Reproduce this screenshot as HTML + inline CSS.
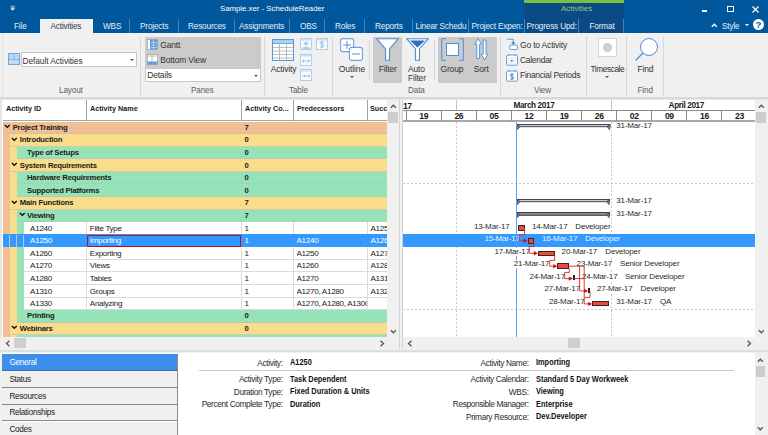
<!DOCTYPE html>
<html><head><meta charset="utf-8">
<style>
*{box-sizing:border-box;margin:0;padding:0}
html,body{width:768px;height:435px;overflow:hidden;background:#f0f0f0;font-family:"Liberation Sans",sans-serif;color:#222}
.a{position:absolute}
.t{position:absolute;white-space:nowrap;line-height:1}
#title{left:0;top:0;width:768px;height:33px;background:#01579b}
.tab{position:absolute;top:19.5px;height:14px;color:#e8eef6;font-size:8.2px;letter-spacing:-0.15px;line-height:14px;white-space:nowrap}
.sep{position:absolute;top:19px;width:1px;height:14px;background:#4a80b8}
.rb{position:absolute;font-size:8.5px;letter-spacing:-0.18px;color:#333;white-space:nowrap;line-height:1;margin-top:0.3px}
.glab{position:absolute;top:86.8px;font-size:8.2px;letter-spacing:-0.15px;color:#5e5e5e;white-space:nowrap;line-height:1}
.gsep{position:absolute;width:1px;background:#d8d8d8}
</style></head><body>
<!-- title + tabs -->
<div id="title" class="a"></div>
<div class="a" style="left:524px;top:0;width:100px;height:3px;background:#7ac143"></div>
<div class="a" style="left:524px;top:3px;width:100px;height:30px;background:#0b4a85"></div>
<div class="t" style="left:561px;top:4.8px;font-size:7.9px;color:#8fcf6a">Activities</div>
<div class="t" style="left:220px;top:4.5px;font-size:7.8px;color:#fff">Sample.xer - ScheduleReader</div>
<!-- quick access -->
<svg class="a" style="left:9.5px;top:4.5px" width="6" height="6"><rect x="0.6" y="0.6" width="4.2" height="3.2" fill="#6f9fd0"/><path d="M0.4 3.6H5L2.7 5.6Z" fill="#fff"/></svg>
<!-- window controls -->
<div class="a" style="left:702px;top:10px;width:5px;height:1.5px;background:#fff"></div>
<div class="a" style="left:727px;top:6px;width:7px;height:6px;border:1px solid #fff;border-top-width:1.5px"></div>
<svg class="a" style="left:752px;top:6px" width="7" height="7"><path d="M0.5 0.5L6.5 6.5M6.5 0.5L0.5 6.5" stroke="#fff" stroke-width="1.2"/></svg>
<!-- tab row -->
<div class="a" style="left:40px;top:19px;width:53px;height:14px;background:#f0f0f0"></div>
<div class="tab" style="left:14px">File</div>
<div class="tab" style="left:50.5px;color:#303848">Activities</div>
<div class="tab" style="left:103px">WBS</div>
<div class="sep" style="left:129px"></div>
<div class="tab" style="left:140px">Projects</div>
<div class="sep" style="left:178px"></div>
<div class="tab" style="left:188px">Resources</div>
<div class="sep" style="left:234px"></div>
<div class="tab" style="left:239px">Assignments</div>
<div class="sep" style="left:289px"></div>
<div class="tab" style="left:300px">OBS</div>
<div class="sep" style="left:324px"></div>
<div class="tab" style="left:335px">Roles</div>
<div class="sep" style="left:364px"></div>
<div class="tab" style="left:375px">Reports</div>
<div class="sep" style="left:412px"></div>
<div class="tab" style="left:415.5px">Linear Schedu</div>
<div class="sep" style="left:468px"></div>
<div class="tab" style="left:471.5px">Project Expen:</div>
<div class="sep" style="left:524px"></div>
<div class="tab" style="left:526.5px">Progress Upd:</div>
<div class="sep" style="left:578px"></div>
<div class="tab" style="left:589.5px">Format</div>
<div class="sep" style="left:623px"></div>
<svg class="a" style="left:711px;top:23px" width="7" height="5"><path d="M0.8 3.8L3.3 1.2L5.8 3.8" stroke="#fff" stroke-width="1.3" fill="none"/></svg>
<div class="tab" style="left:722px">Style</div>
<div class="a" style="left:745px;top:24px;width:0;height:0;border-left:2px solid transparent;border-right:2px solid transparent;border-top:2.5px solid #fff"></div>
<div class="a" style="left:752.9px;top:18.9px;width:11.6px;height:11.4px;border-radius:50%;background:#fff"></div>
<div class="t" style="left:755.6px;top:20.3px;font-size:9.5px;font-weight:700;color:#01579b">?</div>

<!-- RIBBON -->
<div class="a" style="left:0;top:33px;width:768px;height:67px;background:linear-gradient(to bottom,#f0f0f0 0,#f0f0f0 63.5px,#d6d6d6 64.5px,#dedede 66px,#ececec 67px)"></div>
<div class="a" style="left:2px;top:33px;width:1px;height:64px;background:#e2e2e2"></div>

<!-- Layout group -->
<svg class="a" style="left:7.5px;top:53px" width="12" height="12"><rect x="0.5" y="0.5" width="11" height="11" fill="#bcd7f2" stroke="#6fa6de"/><line x1="6" y1="0.5" x2="6" y2="6.5" stroke="#7fb0e2" stroke-width="0.8"/><line x1="0.5" y1="6.5" x2="11.5" y2="6.5" stroke="#7fb0e2" stroke-width="0.8"/><path d="M1.5 8.5H10.5M1.5 10H10.5" stroke="#e6f0fa" stroke-width="0.7" stroke-dasharray="1 1"/></svg>
<div class="a" style="left:21px;top:52px;width:116px;height:14.5px;background:#fff;border:1px solid #c6c6c6"></div>
<div class="rb" style="left:22.5px;top:56.3px;font-size:8.4px;letter-spacing:-0.08px">Default Activities</div>
<div class="a" style="left:129.5px;top:59px;width:0;height:0;border-left:2px solid transparent;border-right:2px solid transparent;border-top:2px solid #555"></div>
<div class="glab" style="left:59px">Layout</div>
<div class="gsep" style="left:140px;top:36px;height:60px"></div>
<!-- Panes -->
<div class="a" style="left:145px;top:37px;width:116px;height:31px;background:#cbcbcb"></div>
<svg class="a" style="left:147px;top:39px" width="11" height="11"><rect x="0.5" y="0.5" width="10" height="10" fill="#fff" stroke="#9a9a9a" stroke-width="0.6"/><rect x="3" y="0.5" width="7.5" height="10" fill="#5b9bd8"/><path d="M4 3.5H10M4 6H10M4 8.5H10M6.5 1V10" stroke="#cfe2f6" stroke-width="0.7"/></svg>
<div class="rb" style="left:160.3px;top:40.3px">Gantt</div>
<svg class="a" style="left:147px;top:54px" width="11" height="11"><rect x="0.5" y="0.5" width="10" height="10" fill="#fff" stroke="#9a9a9a" stroke-width="0.6"/><line x1="5" y1="1" x2="5" y2="7" stroke="#9a9a9a" stroke-width="0.7"/><line x1="0.5" y1="2" x2="10.5" y2="2" stroke="#9a9a9a" stroke-width="0.6"/><rect x="0.5" y="7.5" width="10" height="3" fill="#4f91d4"/><path d="M1 9H10" stroke="#cfe2f6" stroke-width="0.7" stroke-dasharray="1 1"/></svg>
<div class="rb" style="left:160.3px;top:55.8px">Bottom View</div>
<div class="a" style="left:145px;top:67.5px;width:116px;height:14px;background:#fff;border:1px solid #c6c6c6"></div>
<div class="rb" style="left:147.2px;top:71.2px">Details</div>
<div class="a" style="left:254px;top:74.5px;width:0;height:0;border-left:2px solid transparent;border-right:2px solid transparent;border-top:2px solid #555"></div>
<div class="glab" style="left:191px">Panes</div>
<div class="gsep" style="left:264px;top:36px;height:60px"></div>
<!-- Table -->
<svg class="a" style="left:272px;top:38.5px" width="22" height="22"><rect x="0.5" y="0.5" width="21" height="21" fill="#fff" stroke="#5b97d8"/><rect x="1" y="1" width="20" height="3.2" fill="#a9cdf0"/><path d="M1 2.6H21" stroke="#d8e8f8" stroke-width="0.6" stroke-dasharray="1 1"/><path d="M1 4.5H21" stroke="#5b97d8" stroke-width="0.8"/><path d="M1 8.5H21M1 12H21M1 15.5H21M1 19H21M7.5 4.5V21.5M14.5 4.5V21.5" stroke="#a2a2a2" stroke-width="0.7"/></svg>
<div class="rb" style="left:270.8px;top:64.5px">Activity</div>
<svg class="a" style="left:300px;top:38px" width="12" height="12"><rect x="0.5" y="0.5" width="11" height="11" fill="#f7fafd" stroke="#a9cbee" stroke-width="0.9"/><rect x="1" y="1" width="10" height="1.6" fill="#cfe1f4"/><circle cx="6" cy="5.5" r="1.9" fill="#a9cbee"/><path d="M2 11C2.5 8 9.5 8 10 11Z" fill="#a9cbee"/></svg>
<svg class="a" style="left:315.8px;top:38px" width="12" height="12"><rect x="0.5" y="0.5" width="11" height="11" fill="#f7fafd" stroke="#a9cbee" stroke-width="0.9"/><rect x="1" y="1" width="10" height="1.6" fill="#cfe1f4"/><path d="M8 4.3C7.5 3.6 4 3.4 4 5.1C4 6.6 8 6.1 8 7.8C8 9.5 4.5 9.3 4 8.6M6 2.8V10.2" stroke="#8fb9e6" stroke-width="0.9" fill="none"/></svg>
<svg class="a" style="left:300px;top:53.5px" width="12" height="12"><rect x="0.5" y="0.5" width="11" height="11" fill="#f7fafd" stroke="#a9cbee" stroke-width="0.9"/><rect x="1" y="1" width="10" height="1.6" fill="#cfe1f4"/><path d="M2 7H10" stroke="#9cc2e9" stroke-width="0.8"/><path d="M2 7L4 5.5V8.5ZM10 7L8 5.5V8.5Z" fill="#8fb9e6"/></svg>
<svg class="a" style="left:300px;top:69px" width="12" height="12"><rect x="0.5" y="0.5" width="11" height="11" fill="#f7fafd" stroke="#a9cbee" stroke-width="0.9"/><rect x="1" y="1" width="10" height="1.6" fill="#cfe1f4"/><path d="M2 7H10" stroke="#9cc2e9" stroke-width="0.8"/><path d="M6 7L4 5.5V8.5ZM10 7L8 5.5V8.5Z" fill="#8fb9e6"/></svg>
<div class="glab" style="left:289px">Table</div>
<div class="gsep" style="left:332px;top:36px;height:60px"></div>
<!-- Outline -->
<svg class="a" style="left:339.5px;top:38px" width="24" height="23"><rect x="0.6" y="0.6" width="13" height="13" rx="2.2" fill="#fff" stroke="#6fa3dc" stroke-width="1.1"/><path d="M3 7H11M7 3V11" stroke="#4a86c8" stroke-width="0.9"/><rect x="9.4" y="9.4" width="13" height="13" rx="2.2" fill="#fff" stroke="#6fa3dc" stroke-width="1.1"/><path d="M12 16H20" stroke="#4a86c8" stroke-width="0.9"/></svg>
<div class="rb" style="left:338.8px;top:64.5px;letter-spacing:-0.1px">Outline</div>
<div class="a" style="left:349.5px;top:75.5px;width:0;height:0;border-left:2px solid transparent;border-right:2px solid transparent;border-top:2px solid #555"></div>
<div class="gsep" style="left:368.5px;top:40px;height:40px"></div>
<!-- Filter -->
<div class="a" style="left:372.5px;top:36.5px;width:29.5px;height:46px;background:#cbcbcb"></div>
<svg class="a" style="left:376px;top:38px" width="23" height="23"><path d="M0.7 0.7H22.3L13.5 11V22.3H9.5V11Z" fill="#fff" stroke="#4a8ed6" stroke-width="1.1" stroke-linejoin="miter"/></svg>
<div class="rb" style="left:378.8px;top:64.5px">Filter</div>
<svg class="a" style="left:405.5px;top:38px" width="23" height="23"><path d="M0.7 0.7H22.3L13.5 11V22.3H9.5V11Z" fill="#fff" stroke="#4a8ed6" stroke-width="1.1"/><path d="M4 2.5H19L11.5 9.5Z" fill="#2f6fb5"/></svg>
<div class="rb" style="left:408px;top:64.5px">Auto</div>
<div class="rb" style="left:408px;top:73.3px">Filter</div>
<div class="gsep" style="left:433.5px;top:40px;height:40px"></div>
<!-- Group/Sort -->
<div class="a" style="left:437.5px;top:36.5px;width:59px;height:46px;background:#cbcbcb"></div>
<svg class="a" style="left:441px;top:38px" width="23" height="23"><path d="M5 0.7H0.7V22.3H5M18 0.7H22.3V22.3H18" fill="none" stroke="#4a8ed6" stroke-width="1"/><rect x="5.5" y="5.5" width="12" height="12" fill="#fff" stroke="#4a8ed6" stroke-width="1"/></svg>
<div class="rb" style="left:440.5px;top:64.5px">Group</div>
<svg class="a" style="left:474px;top:38px" width="15" height="23"><path d="M0.8 6.2L4.2 0.8L7.6 6.2H5.6V20.5H2.8V6.2Z" fill="#fff" stroke="#4a8ed6" stroke-width="0.9" stroke-linejoin="round"/><path d="M7.2 16.2L10.6 21.8L14 16.2H12V2H9.2V16.2Z" fill="#fff" stroke="#4a8ed6" stroke-width="0.9" stroke-linejoin="round"/></svg>
<div class="rb" style="left:473.8px;top:64.5px">Sort</div>
<div class="glab" style="left:408px">Data</div>
<div class="gsep" style="left:499.5px;top:36px;height:60px"></div>
<!-- View -->
<svg class="a" style="left:506px;top:38px" width="13" height="13"><path d="M0.8 1.2H7.3V4.5" fill="none" stroke="#4a8ed6" stroke-width="0.9"/><path d="M5.3 4.2H9.3L7.3 6.8Z" fill="#2f74c0"/><rect x="3.6" y="7" width="8" height="4.6" rx="1.6" fill="#fff" stroke="#4a8ed6" stroke-width="0.9"/></svg>
<div class="rb" style="left:520px;top:40.3px">Go to Activity</div>
<svg class="a" style="left:506px;top:54px" width="12" height="12"><rect x="0.5" y="1" width="11" height="10.2" rx="1.2" fill="#fff" stroke="#5b97d8" stroke-width="0.9"/><path d="M3 0V2.2M9 0V2.2" stroke="#5b97d8" stroke-width="0.8"/><path d="M2 4.5H10M2 6.8H10M2 9H10" stroke="#8fb9e6" stroke-width="0.6" stroke-dasharray="1 0.8"/><rect x="5" y="6" width="1.6" height="1.4" fill="#2f5e95"/></svg>
<div class="rb" style="left:520px;top:55.8px;letter-spacing:-0.3px">Calendar</div>
<svg class="a" style="left:506px;top:69.5px" width="12" height="12"><rect x="0.5" y="1" width="11" height="10.2" rx="1.2" fill="#fff" stroke="#5b97d8" stroke-width="0.9"/><path d="M3 0V2.2M9 0V2.2" stroke="#5b97d8" stroke-width="0.8"/><path d="M7.8 4.6C7.4 3.9 4.2 3.7 4.2 5.3C4.2 6.7 7.8 6.3 7.8 7.9C7.8 9.5 4.6 9.3 4.2 8.6M6 3V10" stroke="#3f7fc6" stroke-width="0.9" fill="none"/></svg>
<div class="rb" style="left:520px;top:71.2px;letter-spacing:-0.3px">Financial Periods</div>
<div class="glab" style="left:534px">View</div>
<div class="gsep" style="left:586px;top:36px;height:60px"></div>
<!-- Timescale -->
<div class="a" style="left:598px;top:38px;width:18.5px;height:18.5px;background:#fff;border:1px solid #d4d4d4"></div>
<div class="a" style="left:603px;top:43px;width:9px;height:9px;border-radius:50%;background:#d2d2d2;border:0.7px solid #a3d6ad"></div>
<div class="rb" style="left:590.5px;top:64.7px;font-size:8.3px;letter-spacing:-0.42px">Timescale</div>
<div class="a" style="left:605px;top:75.5px;width:0;height:0;border-left:2px solid transparent;border-right:2px solid transparent;border-top:2px solid #555"></div>
<div class="gsep" style="left:626px;top:36px;height:60px"></div>
<!-- Find -->
<svg class="a" style="left:633px;top:37px" width="26" height="25"><circle cx="16" cy="10" r="8.5" fill="#fff" stroke="#4a8ed6" stroke-width="1"/><path d="M10 16L2.5 23.5" stroke="#4a8ed6" stroke-width="1.3"/></svg>
<div class="rb" style="left:637.5px;top:64.5px">Find</div>
<div class="glab" style="left:637.5px">Find</div>
<div class="gsep" style="left:663px;top:36px;height:60px"></div>

<!-- GRID -->
<div class="a" style="left:0;top:99.8px;width:403px;height:237.5px;background:#fff"></div>
<div class="a" style="left:0;top:99.8px;width:2.3px;height:237.5px;background:#e6e6e6"></div>
<div class="a" style="left:0;top:0;width:387.3px;height:336.7px;overflow:hidden">
<div class="a" style="left:2.5px;top:121.60px;width:384.8px;height:12.57px;background:#f2bf95"></div>
<svg class="a" style="left:4.1px;top:124.20px" width="7" height="5"><path d="M0.8 0.9L3.3 3.3L5.8 0.9" stroke="#111" stroke-width="1.35" fill="none"/></svg>
<div class="t" style="left:12.7px;top:123.80px;font-size:7.7px;letter-spacing:-0.2px;font-weight:700;color:#1a1a1a">Project Training</div>
<div class="t" style="left:244.6px;top:123.80px;font-size:7.7px;font-weight:700;color:#1a1a1a">7</div>
<div class="a" style="left:2.5px;top:134.17px;width:7px;height:12.57px;background:#f2bf95"></div>
<div class="a" style="left:9.5px;top:134.17px;width:377.8px;height:12.57px;background:#f9dd8b"></div>
<svg class="a" style="left:11.0px;top:136.77px" width="7" height="5"><path d="M0.8 0.9L3.3 3.3L5.8 0.9" stroke="#111" stroke-width="1.35" fill="none"/></svg>
<div class="t" style="left:19.8px;top:136.37px;font-size:7.7px;letter-spacing:-0.2px;font-weight:700;color:#1a1a1a">Introduction</div>
<div class="t" style="left:244.6px;top:136.37px;font-size:7.7px;font-weight:700;color:#1a1a1a">0</div>
<div class="a" style="left:2.5px;top:146.74px;width:7px;height:12.57px;background:#f2bf95"></div>
<div class="a" style="left:9.5px;top:146.74px;width:7px;height:12.57px;background:#f9dd8b"></div>
<div class="a" style="left:16.5px;top:146.74px;width:370.8px;height:12.57px;background:#95e3b7"></div>
<div class="t" style="left:27.0px;top:148.94px;font-size:7.7px;letter-spacing:-0.2px;font-weight:700;color:#1a1a1a">Type of Setups</div>
<div class="t" style="left:244.6px;top:148.94px;font-size:7.7px;font-weight:700;color:#1a1a1a">0</div>
<div class="a" style="left:2.5px;top:159.31px;width:7px;height:12.57px;background:#f2bf95"></div>
<div class="a" style="left:9.5px;top:159.31px;width:377.8px;height:12.57px;background:#f9dd8b"></div>
<svg class="a" style="left:11.0px;top:161.91px" width="7" height="5"><path d="M0.8 0.9L3.3 3.3L5.8 0.9" stroke="#111" stroke-width="1.35" fill="none"/></svg>
<div class="t" style="left:19.8px;top:161.51px;font-size:7.7px;letter-spacing:-0.2px;font-weight:700;color:#1a1a1a">System Requirements</div>
<div class="t" style="left:244.6px;top:161.51px;font-size:7.7px;font-weight:700;color:#1a1a1a">0</div>
<div class="a" style="left:2.5px;top:171.88px;width:7px;height:12.57px;background:#f2bf95"></div>
<div class="a" style="left:9.5px;top:171.88px;width:7px;height:12.57px;background:#f9dd8b"></div>
<div class="a" style="left:16.5px;top:171.88px;width:370.8px;height:12.57px;background:#95e3b7"></div>
<div class="t" style="left:27.0px;top:174.08px;font-size:7.7px;letter-spacing:-0.2px;font-weight:700;color:#1a1a1a">Hardware Requirements</div>
<div class="t" style="left:244.6px;top:174.08px;font-size:7.7px;font-weight:700;color:#1a1a1a">0</div>
<div class="a" style="left:2.5px;top:184.45px;width:7px;height:12.57px;background:#f2bf95"></div>
<div class="a" style="left:9.5px;top:184.45px;width:7px;height:12.57px;background:#f9dd8b"></div>
<div class="a" style="left:16.5px;top:184.45px;width:370.8px;height:12.57px;background:#95e3b7"></div>
<div class="t" style="left:27.0px;top:186.65px;font-size:7.7px;letter-spacing:-0.2px;font-weight:700;color:#1a1a1a">Supported Platforms</div>
<div class="t" style="left:244.6px;top:186.65px;font-size:7.7px;font-weight:700;color:#1a1a1a">0</div>
<div class="a" style="left:2.5px;top:197.02px;width:7px;height:12.57px;background:#f2bf95"></div>
<div class="a" style="left:9.5px;top:197.02px;width:377.8px;height:12.57px;background:#f9dd8b"></div>
<svg class="a" style="left:11.0px;top:199.62px" width="7" height="5"><path d="M0.8 0.9L3.3 3.3L5.8 0.9" stroke="#111" stroke-width="1.35" fill="none"/></svg>
<div class="t" style="left:19.8px;top:199.22px;font-size:7.7px;letter-spacing:-0.2px;font-weight:700;color:#1a1a1a">Main Functions</div>
<div class="t" style="left:244.6px;top:199.22px;font-size:7.7px;font-weight:700;color:#1a1a1a">7</div>
<div class="a" style="left:2.5px;top:209.59px;width:7px;height:12.57px;background:#f2bf95"></div>
<div class="a" style="left:9.5px;top:209.59px;width:7px;height:12.57px;background:#f9dd8b"></div>
<div class="a" style="left:16.5px;top:209.59px;width:370.8px;height:12.57px;background:#95e3b7"></div>
<svg class="a" style="left:18.6px;top:212.19px" width="7" height="5"><path d="M0.8 0.9L3.3 3.3L5.8 0.9" stroke="#111" stroke-width="1.35" fill="none"/></svg>
<div class="t" style="left:27.0px;top:211.79px;font-size:7.7px;letter-spacing:-0.2px;font-weight:700;color:#1a1a1a">Viewing</div>
<div class="t" style="left:244.6px;top:211.79px;font-size:7.7px;font-weight:700;color:#1a1a1a">7</div>
<div class="a" style="left:2.5px;top:222.16px;width:7px;height:12.57px;background:#f2bf95"></div>
<div class="a" style="left:9.5px;top:222.16px;width:7px;height:12.57px;background:#f9dd8b"></div>
<div class="a" style="left:16.5px;top:222.16px;width:7px;height:12.57px;background:#95e3b7"></div>
<div class="a" style="left:23.5px;top:222.16px;width:363.8px;height:12.57px;background:#fff;border-bottom:1px solid #dadada"></div>
<div class="a" style="left:85.8px;top:222.16px;width:1px;height:12.57px;background:#dadada"></div>
<div class="a" style="left:240.9px;top:222.16px;width:1px;height:12.57px;background:#dadada"></div>
<div class="a" style="left:293.0px;top:222.16px;width:1px;height:12.57px;background:#dadada"></div>
<div class="a" style="left:367.1px;top:222.16px;width:1px;height:12.57px;background:#dadada"></div>
<div class="t" style="left:30.1px;top:224.66px;font-size:8.1px;letter-spacing:-0.3px;color:#1a1a1a">A1240</div>
<div class="t" style="left:89.8px;top:224.66px;font-size:8.1px;letter-spacing:-0.3px;color:#1a1a1a">Filte Type</div>
<div class="t" style="left:244.6px;top:224.66px;font-size:8.1px;letter-spacing:-0.3px;color:#1a1a1a">1</div>
<div class="t" style="left:296.5px;top:224.66px;font-size:8.1px;letter-spacing:-0.3px;color:#1a1a1a;width:70.5px;overflow:hidden"></div>
<div class="t" style="left:370.4px;top:224.66px;font-size:8.1px;letter-spacing:-0.3px;color:#1a1a1a">A125</div>
<div class="a" style="left:2.5px;top:234.43px;width:384.8px;height:12.77px;background:#3399ff"></div>
<div class="a" style="left:9.1px;top:234.73px;width:0.9px;height:12.57px;background:#b9c6d4"></div>
<div class="a" style="left:16.2px;top:234.73px;width:0.9px;height:12.57px;background:#b9c6d4"></div>
<div class="a" style="left:23.1px;top:234.73px;width:0.9px;height:12.57px;background:#b9c6d4"></div>
<div class="a" style="left:85.8px;top:234.73px;width:1px;height:12.57px;background:#3399ff"></div>
<div class="a" style="left:240.9px;top:234.73px;width:1px;height:12.57px;background:#3399ff"></div>
<div class="a" style="left:293.0px;top:234.73px;width:1px;height:12.57px;background:#3399ff"></div>
<div class="a" style="left:367.1px;top:234.73px;width:1px;height:12.57px;background:#3399ff"></div>
<div class="t" style="left:30.1px;top:237.23px;font-size:8.1px;letter-spacing:-0.3px;color:#fff">A1250</div>
<div class="t" style="left:89.8px;top:237.23px;font-size:8.1px;letter-spacing:-0.3px;color:#fff">Importing</div>
<div class="t" style="left:244.6px;top:237.23px;font-size:8.1px;letter-spacing:-0.3px;color:#fff">1</div>
<div class="t" style="left:296.5px;top:237.23px;font-size:8.1px;letter-spacing:-0.3px;color:#fff;width:70.5px;overflow:hidden">A1240</div>
<div class="t" style="left:370.4px;top:237.23px;font-size:8.1px;letter-spacing:-0.3px;color:#fff">A126</div>
<div class="a" style="left:87.2px;top:234.93px;width:153.6px;height:11.97px;border:1.6px solid #b8121f"></div>
<div class="a" style="left:2.5px;top:247.30px;width:7px;height:12.57px;background:#f2bf95"></div>
<div class="a" style="left:9.5px;top:247.30px;width:7px;height:12.57px;background:#f9dd8b"></div>
<div class="a" style="left:16.5px;top:247.30px;width:7px;height:12.57px;background:#95e3b7"></div>
<div class="a" style="left:23.5px;top:247.30px;width:363.8px;height:12.57px;background:#fff;border-bottom:1px solid #dadada"></div>
<div class="a" style="left:85.8px;top:247.30px;width:1px;height:12.57px;background:#dadada"></div>
<div class="a" style="left:240.9px;top:247.30px;width:1px;height:12.57px;background:#dadada"></div>
<div class="a" style="left:293.0px;top:247.30px;width:1px;height:12.57px;background:#dadada"></div>
<div class="a" style="left:367.1px;top:247.30px;width:1px;height:12.57px;background:#dadada"></div>
<div class="t" style="left:30.1px;top:249.80px;font-size:8.1px;letter-spacing:-0.3px;color:#1a1a1a">A1260</div>
<div class="t" style="left:89.8px;top:249.80px;font-size:8.1px;letter-spacing:-0.3px;color:#1a1a1a">Exporting</div>
<div class="t" style="left:244.6px;top:249.80px;font-size:8.1px;letter-spacing:-0.3px;color:#1a1a1a">1</div>
<div class="t" style="left:296.5px;top:249.80px;font-size:8.1px;letter-spacing:-0.3px;color:#1a1a1a;width:70.5px;overflow:hidden">A1250</div>
<div class="t" style="left:370.4px;top:249.80px;font-size:8.1px;letter-spacing:-0.3px;color:#1a1a1a">A127</div>
<div class="a" style="left:2.5px;top:259.87px;width:7px;height:12.57px;background:#f2bf95"></div>
<div class="a" style="left:9.5px;top:259.87px;width:7px;height:12.57px;background:#f9dd8b"></div>
<div class="a" style="left:16.5px;top:259.87px;width:7px;height:12.57px;background:#95e3b7"></div>
<div class="a" style="left:23.5px;top:259.87px;width:363.8px;height:12.57px;background:#fff;border-bottom:1px solid #dadada"></div>
<div class="a" style="left:85.8px;top:259.87px;width:1px;height:12.57px;background:#dadada"></div>
<div class="a" style="left:240.9px;top:259.87px;width:1px;height:12.57px;background:#dadada"></div>
<div class="a" style="left:293.0px;top:259.87px;width:1px;height:12.57px;background:#dadada"></div>
<div class="a" style="left:367.1px;top:259.87px;width:1px;height:12.57px;background:#dadada"></div>
<div class="t" style="left:30.1px;top:262.37px;font-size:8.1px;letter-spacing:-0.3px;color:#1a1a1a">A1270</div>
<div class="t" style="left:89.8px;top:262.37px;font-size:8.1px;letter-spacing:-0.3px;color:#1a1a1a">Views</div>
<div class="t" style="left:244.6px;top:262.37px;font-size:8.1px;letter-spacing:-0.3px;color:#1a1a1a">1</div>
<div class="t" style="left:296.5px;top:262.37px;font-size:8.1px;letter-spacing:-0.3px;color:#1a1a1a;width:70.5px;overflow:hidden">A1260</div>
<div class="t" style="left:370.4px;top:262.37px;font-size:8.1px;letter-spacing:-0.3px;color:#1a1a1a">A128</div>
<div class="a" style="left:2.5px;top:272.44px;width:7px;height:12.57px;background:#f2bf95"></div>
<div class="a" style="left:9.5px;top:272.44px;width:7px;height:12.57px;background:#f9dd8b"></div>
<div class="a" style="left:16.5px;top:272.44px;width:7px;height:12.57px;background:#95e3b7"></div>
<div class="a" style="left:23.5px;top:272.44px;width:363.8px;height:12.57px;background:#fff;border-bottom:1px solid #dadada"></div>
<div class="a" style="left:85.8px;top:272.44px;width:1px;height:12.57px;background:#dadada"></div>
<div class="a" style="left:240.9px;top:272.44px;width:1px;height:12.57px;background:#dadada"></div>
<div class="a" style="left:293.0px;top:272.44px;width:1px;height:12.57px;background:#dadada"></div>
<div class="a" style="left:367.1px;top:272.44px;width:1px;height:12.57px;background:#dadada"></div>
<div class="t" style="left:30.1px;top:274.94px;font-size:8.1px;letter-spacing:-0.3px;color:#1a1a1a">A1280</div>
<div class="t" style="left:89.8px;top:274.94px;font-size:8.1px;letter-spacing:-0.3px;color:#1a1a1a">Tables</div>
<div class="t" style="left:244.6px;top:274.94px;font-size:8.1px;letter-spacing:-0.3px;color:#1a1a1a">1</div>
<div class="t" style="left:296.5px;top:274.94px;font-size:8.1px;letter-spacing:-0.3px;color:#1a1a1a;width:70.5px;overflow:hidden">A1270</div>
<div class="t" style="left:370.4px;top:274.94px;font-size:8.1px;letter-spacing:-0.3px;color:#1a1a1a">A131</div>
<div class="a" style="left:2.5px;top:285.01px;width:7px;height:12.57px;background:#f2bf95"></div>
<div class="a" style="left:9.5px;top:285.01px;width:7px;height:12.57px;background:#f9dd8b"></div>
<div class="a" style="left:16.5px;top:285.01px;width:7px;height:12.57px;background:#95e3b7"></div>
<div class="a" style="left:23.5px;top:285.01px;width:363.8px;height:12.57px;background:#fff;border-bottom:1px solid #dadada"></div>
<div class="a" style="left:85.8px;top:285.01px;width:1px;height:12.57px;background:#dadada"></div>
<div class="a" style="left:240.9px;top:285.01px;width:1px;height:12.57px;background:#dadada"></div>
<div class="a" style="left:293.0px;top:285.01px;width:1px;height:12.57px;background:#dadada"></div>
<div class="a" style="left:367.1px;top:285.01px;width:1px;height:12.57px;background:#dadada"></div>
<div class="t" style="left:30.1px;top:287.51px;font-size:8.1px;letter-spacing:-0.3px;color:#1a1a1a">A1310</div>
<div class="t" style="left:89.8px;top:287.51px;font-size:8.1px;letter-spacing:-0.3px;color:#1a1a1a">Groups</div>
<div class="t" style="left:244.6px;top:287.51px;font-size:8.1px;letter-spacing:-0.3px;color:#1a1a1a">1</div>
<div class="t" style="left:296.5px;top:287.51px;font-size:8.1px;letter-spacing:-0.3px;color:#1a1a1a;width:70.5px;overflow:hidden">A1270, A1280</div>
<div class="t" style="left:370.4px;top:287.51px;font-size:8.1px;letter-spacing:-0.3px;color:#1a1a1a">A132</div>
<div class="a" style="left:2.5px;top:297.58px;width:7px;height:12.57px;background:#f2bf95"></div>
<div class="a" style="left:9.5px;top:297.58px;width:7px;height:12.57px;background:#f9dd8b"></div>
<div class="a" style="left:16.5px;top:297.58px;width:7px;height:12.57px;background:#95e3b7"></div>
<div class="a" style="left:23.5px;top:297.58px;width:363.8px;height:12.57px;background:#fff;border-bottom:1px solid #dadada"></div>
<div class="a" style="left:85.8px;top:297.58px;width:1px;height:12.57px;background:#dadada"></div>
<div class="a" style="left:240.9px;top:297.58px;width:1px;height:12.57px;background:#dadada"></div>
<div class="a" style="left:293.0px;top:297.58px;width:1px;height:12.57px;background:#dadada"></div>
<div class="a" style="left:367.1px;top:297.58px;width:1px;height:12.57px;background:#dadada"></div>
<div class="t" style="left:30.1px;top:300.08px;font-size:8.1px;letter-spacing:-0.3px;color:#1a1a1a">A1330</div>
<div class="t" style="left:89.8px;top:300.08px;font-size:8.1px;letter-spacing:-0.3px;color:#1a1a1a">Analyzing</div>
<div class="t" style="left:244.6px;top:300.08px;font-size:8.1px;letter-spacing:-0.3px;color:#1a1a1a">1</div>
<div class="t" style="left:296.5px;top:300.08px;font-size:8.1px;letter-spacing:-0.3px;color:#1a1a1a;width:70.5px;overflow:hidden">A1270, A1280, A1300</div>
<div class="t" style="left:370.4px;top:300.08px;font-size:8.1px;letter-spacing:-0.3px;color:#1a1a1a"></div>
<div class="a" style="left:2.5px;top:310.15px;width:7px;height:12.57px;background:#f2bf95"></div>
<div class="a" style="left:9.5px;top:310.15px;width:7px;height:12.57px;background:#f9dd8b"></div>
<div class="a" style="left:16.5px;top:310.15px;width:370.8px;height:12.57px;background:#95e3b7"></div>
<div class="t" style="left:27.0px;top:312.35px;font-size:7.7px;letter-spacing:-0.2px;font-weight:700;color:#1a1a1a">Printing</div>
<div class="t" style="left:244.6px;top:312.35px;font-size:7.7px;font-weight:700;color:#1a1a1a">0</div>
<div class="a" style="left:2.5px;top:322.72px;width:7px;height:12.57px;background:#f2bf95"></div>
<div class="a" style="left:9.5px;top:322.72px;width:377.8px;height:12.57px;background:#f9dd8b"></div>
<svg class="a" style="left:11.0px;top:325.32px" width="7" height="5"><path d="M0.8 0.9L3.3 3.3L5.8 0.9" stroke="#111" stroke-width="1.35" fill="none"/></svg>
<div class="t" style="left:19.8px;top:324.92px;font-size:7.7px;letter-spacing:-0.2px;font-weight:700;color:#1a1a1a">Webinars</div>
<div class="t" style="left:244.6px;top:324.92px;font-size:7.7px;font-weight:700;color:#1a1a1a">0</div>
<div class="a" style="left:2.5px;top:335.29px;width:7px;height:12.57px;background:#f2bf95"></div>
<div class="a" style="left:9.5px;top:335.29px;width:7px;height:12.57px;background:#f9dd8b"></div>
<div class="a" style="left:16.5px;top:335.29px;width:370.8px;height:12.57px;background:#95e3b7"></div>
<div class="t" style="left:27.0px;top:337.49px;font-size:7.7px;letter-spacing:-0.2px;font-weight:700;color:#1a1a1a"></div>
<div class="t" style="left:244.6px;top:337.49px;font-size:7.7px;font-weight:700;color:#1a1a1a"></div>
<div class="a" style="left:2.5px;top:133px;width:384.8px;height:1px;background:rgba(190,190,190,0.6)"></div>
<div class="a" style="left:9.5px;top:146px;width:377.8px;height:1px;background:rgba(190,190,190,0.6)"></div>
<div class="a" style="left:16.5px;top:158px;width:370.8px;height:1px;background:rgba(190,190,190,0.6)"></div>
<div class="a" style="left:9.5px;top:171px;width:377.8px;height:1px;background:rgba(190,190,190,0.6)"></div>
<div class="a" style="left:16.5px;top:183px;width:370.8px;height:1px;background:rgba(190,190,190,0.6)"></div>
<div class="a" style="left:16.5px;top:196px;width:370.8px;height:1px;background:rgba(190,190,190,0.6)"></div>
<div class="a" style="left:9.5px;top:209px;width:377.8px;height:1px;background:rgba(190,190,190,0.6)"></div>
<div class="a" style="left:16.5px;top:221px;width:370.8px;height:1px;background:rgba(190,190,190,0.6)"></div>
<div class="a" style="left:16.5px;top:322px;width:370.8px;height:1px;background:rgba(190,190,190,0.6)"></div>
<div class="a" style="left:9.5px;top:334px;width:377.8px;height:1px;background:rgba(190,190,190,0.6)"></div>
<div class="a" style="left:16.5px;top:347px;width:370.8px;height:1px;background:rgba(190,190,190,0.6)"></div>
</div>
<div class="a" style="left:2.5px;top:99.8px;width:385px;height:21px;background:#fff;border-bottom:1px solid #a8a8a8"></div>
<div class="a" style="left:85.8px;top:100px;width:1px;height:20.5px;background:#a0a0a0"></div>
<div class="a" style="left:240.9px;top:100px;width:1px;height:20.5px;background:#a0a0a0"></div>
<div class="a" style="left:293.0px;top:100px;width:1px;height:20.5px;background:#a0a0a0"></div>
<div class="a" style="left:367.1px;top:100px;width:1px;height:20.5px;background:#a0a0a0"></div>
<div class="a" style="left:0;top:0;width:387px;height:121px;overflow:hidden">
<div class="t" style="left:5.9px;top:104.5px;font-size:8.1px;transform:scaleX(0.89);transform-origin:0 0;font-weight:700;color:#1a1a1a">Activity ID</div>
<div class="t" style="left:89.5px;top:104.5px;font-size:8.1px;transform:scaleX(0.89);transform-origin:0 0;font-weight:700;color:#1a1a1a">Activity Name</div>
<div class="t" style="left:244.8px;top:104.5px;font-size:8.1px;transform:scaleX(0.89);transform-origin:0 0;font-weight:700;color:#1a1a1a">Activity Co...</div>
<div class="t" style="left:296.5px;top:104.5px;font-size:8.1px;transform:scaleX(0.89);transform-origin:0 0;font-weight:700;color:#1a1a1a">Predecessors</div>
<div class="t" style="left:370.4px;top:104.5px;font-size:8.1px;transform:scaleX(0.89);transform-origin:0 0;font-weight:700;color:#1a1a1a">Succe</div>
</div>
<!-- /GRID -->
<!-- GANTT -->
<div class="a" style="left:387.3px;top:99.8px;width:12px;height:237.5px;background:#f0f0f0"></div>
<svg class="a" style="left:389.5px;top:103.5px" width="7" height="5"><path d="M0.8 3.8L3.3 1.2L5.8 3.8" stroke="#555" stroke-width="1.3" fill="none"/></svg>
<div class="a" style="left:388px;top:112px;width:9.7px;height:11.3px;background:#cdcdcd"></div>
<svg class="a" style="left:389.5px;top:328.5px" width="7" height="5"><path d="M0.8 1.2L3.3 3.8L5.8 1.2" stroke="#555" stroke-width="1.3" fill="none"/></svg>
<div class="a" style="left:2.5px;top:337px;width:397px;height:12.4px;background:#f0f0f0"></div>
<svg class="a" style="left:5px;top:340px" width="6" height="7"><path d="M4.5 0.8L1.5 3.5L4.5 6.2" stroke="#555" stroke-width="1.3" fill="none"/></svg>
<div class="a" style="left:13.8px;top:337.8px;width:12px;height:10.3px;background:#cfcfcf"></div>
<svg class="a" style="left:378.5px;top:340px" width="6" height="7"><path d="M1.5 0.8L4.5 3.5L1.5 6.2" stroke="#555" stroke-width="1.3" fill="none"/></svg>
<div class="a" style="left:399.2px;top:99.8px;width:3.3px;height:249.7px;background:#f0f0f0"></div>
<div class="a" style="left:399.2px;top:99.8px;width:1px;height:249.6px;background:#d2d2d2"></div>
<div class="a" style="left:401.6px;top:99.8px;width:1px;height:249.6px;background:#d2d2d2"></div>
<div class="a" style="left:402.5px;top:99.8px;width:352.5px;height:237.7px;background:#fff"></div>
<div class="a" style="left:402.5px;top:183px;width:352.5px;height:1px;background:repeating-linear-gradient(to right,#c8c8c8 0,#c8c8c8 2px,transparent 2px,transparent 4px)"></div>
<div class="a" style="left:402.5px;top:309px;width:352.5px;height:1px;background:repeating-linear-gradient(to right,#c8c8c8 0,#c8c8c8 2px,transparent 2px,transparent 4px)"></div>
<div class="a" style="left:455.5px;top:121.7px;width:1px;height:215.7px;background:repeating-linear-gradient(to bottom,#c8c8c8 0,#c8c8c8 2px,transparent 2px,transparent 4px)"></div>
<div class="a" style="left:610.8px;top:121.7px;width:1px;height:215.7px;background:repeating-linear-gradient(to bottom,#c8c8c8 0,#c8c8c8 2px,transparent 2px,transparent 4px)"></div>
<div class="a" style="left:402.5px;top:234.43px;width:352.5px;height:12.77px;background:#3399ff"></div>
<div class="a" style="left:516px;top:121.7px;width:1px;height:215.7px;background:#5aa5f5"></div>
<div class="a" style="left:402.5px;top:99.8px;width:352.5px;height:21px;background:#fff"></div>
<div class="a" style="left:402.5px;top:110px;width:352.5px;height:1px;background:#8a8a8a"></div>
<div class="a" style="left:402.5px;top:120.3px;width:352.5px;height:1.4px;background:#a8a8a8"></div>
<div class="a" style="left:455.5px;top:99.8px;width:1px;height:10.2px;background:#c4c4c4"></div>
<div class="a" style="left:610.8px;top:99.8px;width:1px;height:10.2px;background:#c4c4c4"></div>
<div class="a" style="left:402.5px;top:0;width:352.5px;height:121px;overflow:hidden">
<div class="a" style="left:3.27px;top:110.5px;width:1px;height:10px;background:#8a8a8a"></div>
<div class="a" style="left:38.35px;top:110.5px;width:1px;height:10px;background:#8a8a8a"></div>
<div class="a" style="left:73.43px;top:110.5px;width:1px;height:10px;background:#8a8a8a"></div>
<div class="a" style="left:108.51px;top:110.5px;width:1px;height:10px;background:#8a8a8a"></div>
<div class="a" style="left:143.59px;top:110.5px;width:1px;height:10px;background:#8a8a8a"></div>
<div class="a" style="left:178.67px;top:110.5px;width:1px;height:10px;background:#8a8a8a"></div>
<div class="a" style="left:213.75px;top:110.5px;width:1px;height:10px;background:#8a8a8a"></div>
<div class="a" style="left:248.83px;top:110.5px;width:1px;height:10px;background:#8a8a8a"></div>
<div class="a" style="left:283.91px;top:110.5px;width:1px;height:10px;background:#8a8a8a"></div>
<div class="a" style="left:318.99px;top:110.5px;width:1px;height:10px;background:#8a8a8a"></div>
<div class="a" style="left:354.07px;top:110.5px;width:1px;height:10px;background:#8a8a8a"></div>
<div class="t" style="left:6.31px;width:30px;text-align:center;top:111.5px;font-size:8.6px;letter-spacing:-0.3px;font-weight:700;color:#1a1a1a">19</div>
<div class="t" style="left:41.39px;width:30px;text-align:center;top:111.5px;font-size:8.6px;letter-spacing:-0.3px;font-weight:700;color:#1a1a1a">26</div>
<div class="t" style="left:76.47px;width:30px;text-align:center;top:111.5px;font-size:8.6px;letter-spacing:-0.3px;font-weight:700;color:#1a1a1a">05</div>
<div class="t" style="left:111.55px;width:30px;text-align:center;top:111.5px;font-size:8.6px;letter-spacing:-0.3px;font-weight:700;color:#1a1a1a">12</div>
<div class="t" style="left:146.63px;width:30px;text-align:center;top:111.5px;font-size:8.6px;letter-spacing:-0.3px;font-weight:700;color:#1a1a1a">19</div>
<div class="t" style="left:181.71px;width:30px;text-align:center;top:111.5px;font-size:8.6px;letter-spacing:-0.3px;font-weight:700;color:#1a1a1a">26</div>
<div class="t" style="left:216.79px;width:30px;text-align:center;top:111.5px;font-size:8.6px;letter-spacing:-0.3px;font-weight:700;color:#1a1a1a">02</div>
<div class="t" style="left:251.87px;width:30px;text-align:center;top:111.5px;font-size:8.6px;letter-spacing:-0.3px;font-weight:700;color:#1a1a1a">09</div>
<div class="t" style="left:286.95px;width:30px;text-align:center;top:111.5px;font-size:8.6px;letter-spacing:-0.3px;font-weight:700;color:#1a1a1a">16</div>
<div class="t" style="left:322.03px;width:30px;text-align:center;top:111.5px;font-size:8.6px;letter-spacing:-0.3px;font-weight:700;color:#1a1a1a">23</div>
<div class="t" style="left:0.40px;top:101.6px;font-size:8.6px;letter-spacing:-0.3px;font-weight:700;color:#1a1a1a">17</div>
<div class="t" style="left:111.00px;top:101.9px;font-size:8.2px;letter-spacing:-0.38px;font-weight:700;color:#1a1a1a">March 2017</div>
<div class="t" style="left:266.10px;top:101.9px;font-size:8.2px;letter-spacing:-0.38px;font-weight:700;color:#1a1a1a">April 2017</div>
</div>
<div class="t" style="left:616.2px;top:122.00px;font-size:8px;letter-spacing:-0.15px;color:#2a2a2a;background:#fff;">31-Mar-17</div>
<div class="t" style="left:616.2px;top:197.42px;font-size:8px;letter-spacing:-0.15px;color:#2a2a2a;background:#fff;">31-Mar-17</div>
<div class="t" style="left:616.2px;top:209.99px;font-size:8px;letter-spacing:-0.15px;color:#2a2a2a;background:#fff;">31-Mar-17</div>
<div class="t" style="left:474px;top:222.56px;font-size:8px;letter-spacing:-0.15px;color:#2a2a2a;background:#fff;">13-Mar-17</div>
<div class="t" style="left:531.9px;top:222.56px;font-size:8px;letter-spacing:-0.15px;color:#2a2a2a;background:#fff;">14-Mar-17</div>
<div class="t" style="left:575.3px;top:222.56px;font-size:8px;letter-spacing:-0.15px;color:#2a2a2a;background:#fff;">Developer</div>
<div class="t" style="left:484.4px;top:235.13px;font-size:8px;letter-spacing:-0.15px;color:#eaf3ff;">15-Mar-17</div>
<div class="t" style="left:541.9px;top:235.13px;font-size:8px;letter-spacing:-0.15px;color:#eaf3ff;">16-Mar-17</div>
<div class="t" style="left:585px;top:235.13px;font-size:8px;letter-spacing:-0.15px;color:#eaf3ff;">Developer</div>
<div class="t" style="left:494.4px;top:247.70px;font-size:8px;letter-spacing:-0.15px;color:#2a2a2a;background:#fff;">17-Mar-17</div>
<div class="t" style="left:561.6px;top:247.70px;font-size:8px;letter-spacing:-0.15px;color:#2a2a2a;background:#fff;">20-Mar-17</div>
<div class="t" style="left:605.3px;top:247.70px;font-size:8px;letter-spacing:-0.15px;color:#2a2a2a;background:#fff;">Developer</div>
<div class="t" style="left:513.75px;top:260.27px;font-size:8px;letter-spacing:-0.15px;color:#2a2a2a;background:#fff;">21-Mar-17</div>
<div class="t" style="left:576.6px;top:260.27px;font-size:8px;letter-spacing:-0.15px;color:#2a2a2a;background:#fff;">23-Mar-17</div>
<div class="t" style="left:620px;top:260.27px;font-size:8px;letter-spacing:-0.15px;color:#2a2a2a;background:#fff;">Senior Developer</div>
<div class="t" style="left:529.4px;top:272.84px;font-size:8px;letter-spacing:-0.15px;color:#2a2a2a;background:#fff;">24-Mar-17</div>
<div class="t" style="left:581.9px;top:272.84px;font-size:8px;letter-spacing:-0.15px;color:#2a2a2a;background:#fff;">24-Mar-17</div>
<div class="t" style="left:625px;top:272.84px;font-size:8px;letter-spacing:-0.15px;color:#2a2a2a;background:#fff;">Senior Developer</div>
<div class="t" style="left:544.4px;top:285.41px;font-size:8px;letter-spacing:-0.15px;color:#2a2a2a;background:#fff;">27-Mar-17</div>
<div class="t" style="left:596.9px;top:285.41px;font-size:8px;letter-spacing:-0.15px;color:#2a2a2a;background:#fff;">27-Mar-17</div>
<div class="t" style="left:640.6px;top:285.41px;font-size:8px;letter-spacing:-0.15px;color:#2a2a2a;background:#fff;">Developer</div>
<div class="t" style="left:549px;top:297.98px;font-size:8px;letter-spacing:-0.15px;color:#2a2a2a;background:#fff;">28-Mar-17</div>
<div class="t" style="left:616.25px;top:297.98px;font-size:8px;letter-spacing:-0.15px;color:#2a2a2a;background:#fff;">31-Mar-17</div>
<div class="t" style="left:660px;top:297.98px;font-size:8px;letter-spacing:-0.15px;color:#2a2a2a;background:#fff;">QA</div>
<svg class="a" style="left:517px;top:124.00px" width="94.0" height="7"><rect x="0.5" y="0.5" width="92.5" height="2.2" fill="#c5ced8" stroke="#30353c" stroke-width="0.9"/><path d="M0.3 0.3V6L3.2 2.6Z" fill="#707780" stroke="#30353c" stroke-width="0.5"/><path d="M92.7 0.3V6L89.8 2.6Z" fill="#707780" stroke="#30353c" stroke-width="0.5"/></svg>
<svg class="a" style="left:517.2px;top:199.42px" width="93.6" height="7"><rect x="0.5" y="0.5" width="92.1" height="2.2" fill="#c5ced8" stroke="#30353c" stroke-width="0.9"/><path d="M0.3 0.3V6L3.2 2.6Z" fill="#707780" stroke="#30353c" stroke-width="0.5"/><path d="M92.3 0.3V6L89.4 2.6Z" fill="#707780" stroke="#30353c" stroke-width="0.5"/></svg>
<svg class="a" style="left:517.2px;top:211.99px" width="93.6" height="7"><rect x="0.5" y="0.5" width="92.1" height="2.8" fill="#8e8e8e" stroke="#30353c" stroke-width="0.9"/><path d="M0.3 0.3V6L3.2 2.6Z" fill="#707780" stroke="#30353c" stroke-width="0.5"/><path d="M92.3 0.3V6L89.4 2.6Z" fill="#707780" stroke="#30353c" stroke-width="0.5"/></svg>
<div class="a" style="left:517.5px;top:225.46px;width:7.1px;height:5.5px;background:#e84a3c;border:1px solid #3c2420"></div>
<div class="a" style="left:527.7px;top:238.03px;width:6.3px;height:5.5px;background:#e84a3c;border:1px solid #3c2420"></div>
<div class="a" style="left:538px;top:250.60px;width:16.7px;height:5.5px;background:#e84a3c;border:1px solid #3c2420"></div>
<div class="a" style="left:557.4px;top:263.17px;width:11.5px;height:5.5px;background:#e84a3c;border:1px solid #3c2420"></div>
<div class="a" style="left:592.4px;top:300.88px;width:16.6px;height:5.5px;background:#e84a3c;border:1px solid #3c2420"></div>
<div class="a" style="left:573px;top:275.24px;width:1.6px;height:5px;background:#222"></div>
<div class="a" style="left:588.2px;top:287.81px;width:1.8px;height:5px;background:#222"></div>
<svg class="a" style="left:0;top:0" width="768" height="435"><path d="M524.6 228V234.8H519.4V240.8H526" stroke="#d42a20" stroke-width="0.9" fill="none"/><path d="M534 242.7V246.6H529.2V253.3H536.5" stroke="#d42a20" stroke-width="0.9" fill="none"/><path d="M554.7 255.5V260.4H549.7V266.2H556" stroke="#d42a20" stroke-width="0.9" fill="none"/><path d="M568.9 266.2H584.2V303.9H591" stroke="#d42a20" stroke-width="0.9" fill="none"/><path d="M579.6 266.2V290.9H586.8" stroke="#d42a20" stroke-width="0.9" fill="none"/><path d="M569.3 268.4V272.4H564.7V278.6H571.8" stroke="#d42a20" stroke-width="0.9" fill="none"/><path d="M574.6 278.6H584.2" stroke="#d42a20" stroke-width="0.9" fill="none"/><path d="M590 291V297.4H584.2" stroke="#d42a20" stroke-width="0.9" fill="none"/><path d="M527.5 240.8L523.5 238.60000000000002V243.0Z" fill="#d01010"/><path d="M537.8 253.3L533.8 251.10000000000002V255.5Z" fill="#d01010"/><path d="M557.1999999999999 266.2L553.1999999999999 264.0V268.4Z" fill="#d01010"/><path d="M572.8 278.6L568.8 276.40000000000003V280.8Z" fill="#d01010"/><path d="M588.0 290.9L584.0 288.7V293.09999999999997Z" fill="#d01010"/><path d="M592.1999999999999 303.9L588.1999999999999 301.7V306.09999999999997Z" fill="#d01010"/></svg>
<div class="a" style="left:755px;top:99.8px;width:13px;height:237.7px;background:#f0f0f0"></div>
<svg class="a" style="left:757.5px;top:103.5px" width="7" height="5"><path d="M0.8 3.8L3.3 1.2L5.8 3.8" stroke="#555" stroke-width="1.3" fill="none"/></svg>
<div class="a" style="left:756px;top:112px;width:10px;height:11.3px;background:#cdcdcd"></div>
<svg class="a" style="left:757.5px;top:328.5px" width="7" height="5"><path d="M0.8 1.2L3.3 3.8L5.8 1.2" stroke="#555" stroke-width="1.3" fill="none"/></svg>
<div class="a" style="left:402.5px;top:337.5px;width:365.5px;height:11.9px;background:#f0f0f0"></div>
<svg class="a" style="left:407px;top:340px" width="6" height="7"><path d="M4.5 0.8L1.5 3.5L4.5 6.2" stroke="#555" stroke-width="1.3" fill="none"/></svg>
<div class="a" style="left:568.3px;top:337.8px;width:11.3px;height:10.3px;background:#cfcfcf"></div>
<svg class="a" style="left:746px;top:340px" width="6" height="7"><path d="M1.5 0.8L4.5 3.5L1.5 6.2" stroke="#555" stroke-width="1.3" fill="none"/></svg>
<div class="a" style="left:0;top:349.4px;width:768px;height:3.6px;background:#f0f0f0"></div>
<div class="a" style="left:0;top:349.6px;width:768px;height:2.6px;background:#dedede"></div>
<!-- /GANTT -->
<!-- BOTTOM -->
<div class="a" style="left:0;top:353px;width:768px;height:82px;background:#fff"></div>
<div class="a" style="left:0;top:353px;width:2px;height:82px;background:#f0f0f0"></div>
<div class="a" style="left:2px;top:354.30px;width:175.5px;height:16.80px;background:#3c8fea;border-bottom:1px solid #3a6fb0"></div>
<div class="t" style="left:9.4px;top:359.00px;font-size:8.2px;letter-spacing:-0.28px;color:#fff">General</div>
<div class="a" style="left:2px;top:371.10px;width:175.5px;height:16.80px;background:#f0f0f0;border-bottom:1px solid #8a8a8a"></div>
<div class="t" style="left:9.4px;top:375.80px;font-size:8.2px;letter-spacing:-0.28px;color:#1a1a1a">Status</div>
<div class="a" style="left:2px;top:387.90px;width:175.5px;height:16.80px;background:#f0f0f0;border-bottom:1px solid #8a8a8a"></div>
<div class="t" style="left:9.4px;top:392.60px;font-size:8.2px;letter-spacing:-0.28px;color:#1a1a1a">Resources</div>
<div class="a" style="left:2px;top:404.70px;width:175.5px;height:16.80px;background:#f0f0f0;border-bottom:1px solid #8a8a8a"></div>
<div class="t" style="left:9.4px;top:409.40px;font-size:8.2px;letter-spacing:-0.28px;color:#1a1a1a">Relationships</div>
<div class="a" style="left:2px;top:421.50px;width:175.5px;height:16.80px;background:#f0f0f0;border-bottom:1px solid #8a8a8a"></div>
<div class="t" style="left:9.4px;top:426.20px;font-size:8.2px;letter-spacing:-0.28px;color:#1a1a1a">Codes</div>
<div class="a" style="left:177.2px;top:354px;width:1px;height:81px;background:#8a8a8a"></div>
<div class="a" style="left:199px;top:369.8px;width:535px;height:1px;background:#c8c8c8"></div>
<div class="t" style="left:132.6px;width:150px;text-align:right;top:358.65px;font-size:8.3px;letter-spacing:-0.36px;color:#2a2a2a">Activity:</div>
<div class="t" style="left:290.4px;top:358.15px;font-size:8.6px;transform:scaleX(0.86);transform-origin:0 0;font-weight:700;color:#111">A1250</div>
<div class="t" style="left:132.6px;width:150px;text-align:right;top:375.05px;font-size:8.3px;letter-spacing:-0.36px;color:#2a2a2a">Activity Type:</div>
<div class="t" style="left:290.4px;top:374.55px;font-size:8.6px;transform:scaleX(0.86);transform-origin:0 0;font-weight:700;color:#111">Task Dependent</div>
<div class="t" style="left:132.6px;width:150px;text-align:right;top:387.85px;font-size:8.3px;letter-spacing:-0.36px;color:#2a2a2a">Duration Type:</div>
<div class="t" style="left:290.4px;top:387.35px;font-size:8.6px;transform:scaleX(0.86);transform-origin:0 0;font-weight:700;color:#111">Fixed Duration &amp; Units</div>
<div class="t" style="left:132.6px;width:150px;text-align:right;top:400.35px;font-size:8.3px;letter-spacing:-0.36px;color:#2a2a2a">Percent Complete Type:</div>
<div class="t" style="left:290.4px;top:399.85px;font-size:8.6px;transform:scaleX(0.86);transform-origin:0 0;font-weight:700;color:#111">Duration</div>
<div class="t" style="left:378.6px;width:150px;text-align:right;top:358.65px;font-size:8.3px;letter-spacing:-0.36px;color:#2a2a2a">Activity Name:</div>
<div class="t" style="left:536.4px;top:358.15px;font-size:8.6px;transform:scaleX(0.86);transform-origin:0 0;font-weight:700;color:#111">Importing</div>
<div class="t" style="left:378.6px;width:150px;text-align:right;top:375.05px;font-size:8.3px;letter-spacing:-0.36px;color:#2a2a2a">Activity Calendar:</div>
<div class="t" style="left:536.4px;top:374.55px;font-size:8.6px;transform:scaleX(0.86);transform-origin:0 0;font-weight:700;color:#111">Standard 5 Day Workweek</div>
<div class="t" style="left:378.6px;width:150px;text-align:right;top:387.85px;font-size:8.3px;letter-spacing:-0.36px;color:#2a2a2a">WBS:</div>
<div class="t" style="left:536.4px;top:387.35px;font-size:8.6px;transform:scaleX(0.86);transform-origin:0 0;font-weight:700;color:#111">Viewing</div>
<div class="t" style="left:378.6px;width:150px;text-align:right;top:400.35px;font-size:8.3px;letter-spacing:-0.36px;color:#2a2a2a">Responsible Manager:</div>
<div class="t" style="left:536.4px;top:399.85px;font-size:8.6px;transform:scaleX(0.86);transform-origin:0 0;font-weight:700;color:#111">Enterprise</div>
<div class="t" style="left:378.6px;width:150px;text-align:right;top:412.85px;font-size:8.3px;letter-spacing:-0.36px;color:#2a2a2a">Primary Resource:</div>
<div class="t" style="left:536.4px;top:412.35px;font-size:8.6px;transform:scaleX(0.86);transform-origin:0 0;font-weight:700;color:#111">Dev.Developer</div>
<div class="a" style="left:755.2px;top:353px;width:12.8px;height:82px;background:#f0f0f0"></div>
<svg class="a" style="left:757.3px;top:357.5px" width="7" height="5"><path d="M0.8 3.8L3.3 1.2L5.8 3.8" stroke="#555" stroke-width="1.3" fill="none"/></svg>
<div class="a" style="left:755.6px;top:365.7px;width:9.9px;height:11.3px;background:#cdcdcd"></div>
<svg class="a" style="left:757.3px;top:426px" width="7" height="5"><path d="M0.8 1.2L3.3 3.8L5.8 1.2" stroke="#555" stroke-width="1.3" fill="none"/></svg>
<!-- /BOTTOM -->
</body></html>
